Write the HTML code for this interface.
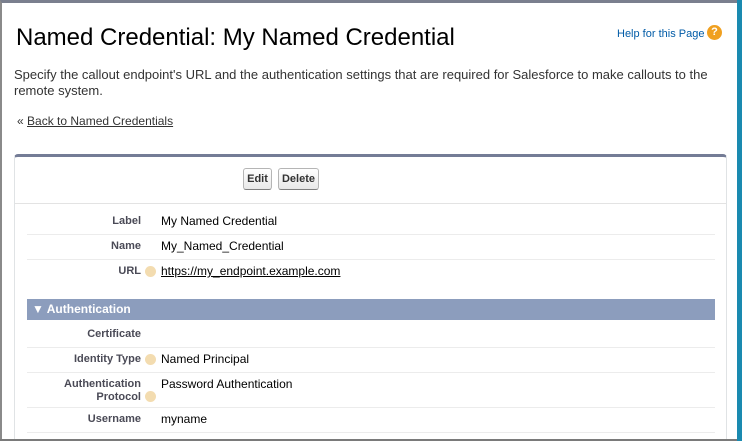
<!DOCTYPE html>
<html style="overflow:hidden"><head><style>
*{margin:0;padding:0;box-sizing:border-box}
html,body{width:742px;height:441px;overflow:hidden}
body{background:#fff;font-family:"Liberation Sans",Arial,sans-serif;position:relative}
.frame{position:absolute;left:0;top:0;width:742px;height:441px;border-top:3px solid #7a7f8e;border-left:2px solid #8a8a8a}
.teal{position:absolute;right:0;top:0;width:5px;height:441px;background:#1a8ab0}
h1{position:absolute;left:16px;top:24px;font-size:24px;font-weight:normal;color:#000}
.help{position:absolute;left:617px;top:28px;font-size:11px;color:#015ba7}
.hq{position:absolute;left:707px;top:25px;width:15px;height:15px;border-radius:50%;background:#f0a020;color:#fff;font-size:11px;font-weight:bold;text-align:center;line-height:15px}
.desc{position:absolute;left:14px;top:67px;font-size:13px;color:#333;line-height:16px;width:712px}
.back{position:absolute;left:17px;top:114px;font-size:12px;color:#333}
.back u{color:#333}
.panel{position:absolute;left:14px;top:154px;width:713px;height:290px;border:1px solid #e0e3e5;border-top:3px solid #747c96;border-radius:4px 4px 0 0}
.btn{position:absolute;top:168px;height:22px;border:1px solid #b5b5b5;border-bottom-color:#7f7f7f;border-radius:3px;background:linear-gradient(#fff,#e8e8e8);font-size:11px;font-weight:bold;color:#333;line-height:20px;text-align:center}
.topline{position:absolute;left:15px;top:203px;width:711px;height:1px;background:#e3e3e3}
.sep{position:absolute;left:27px;width:688px;height:1px;background:#ececec}
.lab{position:absolute;right:601px;font-size:11px;font-weight:bold;color:#4a4a56;text-align:right;line-height:13px}
.val{position:absolute;left:161px;font-size:12px;color:#000}
.ic{position:absolute;left:145px;width:11px;height:11px;border-radius:50%;background:#f3dcb0}
.sec{position:absolute;left:27px;top:299px;width:688px;height:21px;background:#8c9dbd;color:#fff;font-weight:bold;font-size:12px;line-height:21px;padding-left:5px}
</style></head><body>
<div class="frame"></div><div class="teal"></div>
<h1>Named Credential: My Named Credential</h1>
<div class="help">Help for this Page</div><div class="hq">?</div>
<div class="desc">Specify the callout endpoint's URL and the authentication settings that are required for Salesforce to make callouts to the remote system.</div>
<div class="back">« <u>Back to Named Credentials</u></div>
<div class="panel"></div>
<div class="btn" style="left:243px;width:29px">Edit</div>
<div class="btn" style="left:278px;width:41px">Delete</div>
<div class="topline"></div>
<div class="lab" style="top:215px">Label</div><div class="val" style="top:214px">My Named Credential</div>
<div class="sep" style="top:234px"></div>
<div class="lab" style="top:240px">Name</div><div class="val" style="top:239px">My_Named_Credential</div>
<div class="sep" style="top:259px"></div>
<div class="lab" style="top:265px">URL</div><div class="ic" style="top:266px"></div><div class="val" style="top:264px;text-decoration:underline">https://my_endpoint.example.com</div>
<div class="sec">▼ Authentication</div>
<div class="lab" style="top:328px">Certificate</div>
<div class="sep" style="top:347px"></div>
<div class="lab" style="top:353px">Identity Type</div><div class="ic" style="top:354px"></div><div class="val" style="top:352px">Named Principal</div>
<div class="sep" style="top:372px"></div>
<div class="lab" style="top:378px">Authentication<br>Protocol</div><div class="ic" style="top:391px"></div><div class="val" style="top:377px">Password Authentication</div>
<div class="sep" style="top:407px"></div>
<div class="lab" style="top:413px">Username</div><div class="val" style="top:412px">myname</div>
<div class="sep" style="top:432px"></div>
<div style="position:absolute;left:0;top:439px;width:737px;height:2px;background:#7a7a7a"></div>
</body></html>
